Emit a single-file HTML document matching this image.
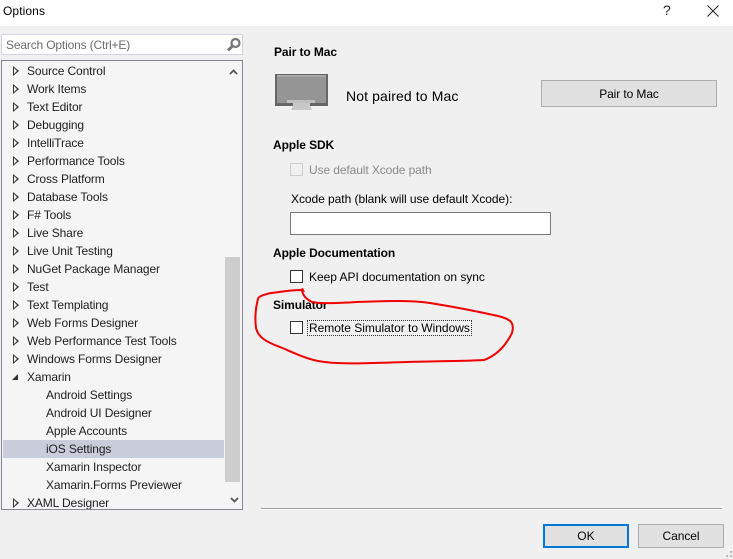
<!DOCTYPE html>
<html><head><meta charset="utf-8"><style>
html,body{margin:0;padding:0}
body{width:733px;height:559px;overflow:hidden;position:relative;background:#f0f0f0;font:12px "Liberation Sans",sans-serif;color:#1e1e1e}
div{position:absolute;white-space:nowrap;box-sizing:border-box}
.t{line-height:18px;height:18px;left:27px;letter-spacing:-.12px}
.c{left:46px}
.a{left:13px;width:0;height:0;border-left:6px solid #333;border-top:5px solid transparent;border-bottom:5px solid transparent}
.a:after{content:"";position:absolute;left:-5px;top:-3px;width:0;height:0;border-left:3.5px solid #f5f5f5;border-top:3px solid transparent;border-bottom:3px solid transparent}
.h{font-weight:bold;color:#000;letter-spacing:-.1px;line-height:16px}
.l{line-height:16px;color:#000;letter-spacing:-.03px}
.cb{width:13px;height:13px;border:1px solid #333;background:#fff}
.b{background:#e1e1e1;border:1px solid #adadad;text-align:center;color:#000}
</style></head><body>
<div style="left:0;top:0;width:733px;height:26px;background:#fff"></div>
<div style="left:3px;top:3px;line-height:16px;color:#000;letter-spacing:.1px">Options</div>
<div style="left:663px;top:2px;font-size:14px;line-height:16px;color:#222">?</div>
<svg style="position:absolute;left:707px;top:5px" width="12" height="12"><path d="M.5 .5L11.5 11.5M11.5 .5L.5 11.5" stroke="#222" stroke-width="1" fill="none"/></svg>

<div style="left:1px;top:34px;width:242px;height:21px;background:#fff;border:1px solid #d4d2e4"></div>
<div style="left:6px;top:37px;line-height:16px;color:#6d6d6d;letter-spacing:-.16px">Search Options (Ctrl+E)</div>
<svg style="position:absolute;left:226px;top:37px" width="16" height="16"><circle cx="9.5" cy="6" r="4" fill="none" stroke="#777" stroke-width="2.2"/><path d="M6.5 9L2 13.5" stroke="#777" stroke-width="3"/></svg>

<div style="left:1px;top:60px;width:242px;height:450px;background:#f5f5f5;border:1px solid #828790;overflow:hidden" id="tree">
<div style="left:223px;top:196px;width:15px;height:225px;background:#cdcdcd"></div>
<svg style="position:absolute;left:227px;top:7px" width="10" height="8"><path d="M1 6L4.5 2.5L8 6" stroke="#555" stroke-width="1.8" fill="none"/></svg>
<svg style="position:absolute;left:228px;top:435px" width="10" height="8"><path d="M1 2L4.5 5.5L8 2" stroke="#555" stroke-width="1.8" fill="none"/></svg>
<div style="left:1px;top:379px;width:221px;height:18px;background:#c9ccdb"></div>
</div>
<div class="a" style="top:66px"></div><div class="t" style="top:62px">Source Control</div>
<div class="a" style="top:84px"></div><div class="t" style="top:80px">Work Items</div>
<div class="a" style="top:102px"></div><div class="t" style="top:98px">Text Editor</div>
<div class="a" style="top:120px"></div><div class="t" style="top:116px">Debugging</div>
<div class="a" style="top:138px"></div><div class="t" style="top:134px">IntelliTrace</div>
<div class="a" style="top:156px"></div><div class="t" style="top:152px">Performance Tools</div>
<div class="a" style="top:174px"></div><div class="t" style="top:170px">Cross Platform</div>
<div class="a" style="top:192px"></div><div class="t" style="top:188px">Database Tools</div>
<div class="a" style="top:210px"></div><div class="t" style="top:206px">F# Tools</div>
<div class="a" style="top:228px"></div><div class="t" style="top:224px">Live Share</div>
<div class="a" style="top:246px"></div><div class="t" style="top:242px">Live Unit Testing</div>
<div class="a" style="top:264px"></div><div class="t" style="top:260px">NuGet Package Manager</div>
<div class="a" style="top:282px"></div><div class="t" style="top:278px">Test</div>
<div class="a" style="top:300px"></div><div class="t" style="top:296px">Text Templating</div>
<div class="a" style="top:318px"></div><div class="t" style="top:314px">Web Forms Designer</div>
<div class="a" style="top:336px"></div><div class="t" style="top:332px">Web Performance Test Tools</div>
<div class="a" style="top:354px"></div><div class="t" style="top:350px">Windows Forms Designer</div>
<svg style="position:absolute;left:11px;top:373px" width="9" height="9"><path d="M7 1V7H1Z" fill="#333"/></svg><div class="t" style="top:368px">Xamarin</div>
<div class="t c" style="top:386px">Android Settings</div>
<div class="t c" style="top:404px">Android UI Designer</div>
<div class="t c" style="top:422px">Apple Accounts</div>
<div class="t c" style="top:440px">iOS Settings</div>
<div class="t c" style="top:458px">Xamarin Inspector</div>
<div class="t c" style="top:476px">Xamarin.Forms Previewer</div>
<div class="a" style="top:498px"></div><div style="left:2px;top:494px;width:222px;height:15px;overflow:hidden"><div class="t" style="top:0;left:25px">XAML Designer</div></div>

<div class="h" style="left:274px;top:44px">Pair to Mac</div>
<svg style="position:absolute;left:275px;top:74px" width="54" height="37">
<path d="M0 0H53V32H0Z" fill="#666"/><path d="M2 1H51V29H2Z" fill="#959595"/><path d="M2 1H51V3H2Z" fill="#a8a8a8"/>
<path d="M12 26H40V29H12Z" fill="#c0c0c0"/><path d="M18 29H35V32L37 36H16L18 32Z" fill="#c8c8c8"/>
</svg>
<div style="left:346px;top:87px;font-size:14px;line-height:18px;color:#000;letter-spacing:.12px">Not paired to Mac</div>
<div class="b" style="left:541px;top:80px;width:176px;height:27px;line-height:26px;letter-spacing:-.1px">Pair to Mac</div>

<div class="h" style="left:273px;top:137px">Apple SDK</div>
<div class="cb" style="left:290px;top:163px;border-color:#ccc;background:#f0f0f0"></div>
<div class="l" style="left:309px;top:162px;color:#8a8a8a;letter-spacing:-.1px">Use default Xcode path</div>
<div class="l" style="left:291px;top:191px;letter-spacing:-.05px">Xcode path (blank will use default Xcode):</div>
<div style="left:290px;top:212px;width:261px;height:23px;background:#fff;border:1px solid #7a7a7a"></div>

<div class="h" style="left:273px;top:245px">Apple Documentation</div>
<div class="cb" style="left:290px;top:270px"></div>
<div class="l" style="left:309px;top:269px">Keep API documentation on sync</div>
<div class="h" style="left:273px;top:297px">Simulator</div>
<div class="cb" style="left:290px;top:321px"></div>
<div class="l" style="left:307px;top:320px;height:16px;padding:0 1px;border:1px dotted #333;line-height:14px;letter-spacing:-.02px">Remote Simulator to Windows</div>

<svg style="position:absolute;left:0;top:0" width="733" height="559"><path d="M301 290C290 290 280 292 271 293C262 295 258 297 258 299C255 310 255 320 256 328C258 337 266 342 280 347C292 352 304 358 318 361C340 365 370 363 407 362C440 361 470 361 484 360C495 356 505 347 512 333C515 322 510 319 498 316C480 312 455 307 430 303C410 300 385 301 357 302C340 303 322 304 312 302C306 299 302 295 302 289" fill="none" stroke="#f00000" stroke-width="2"/><path d="M298 290L303 288L305 292Z" fill="#f00000"/></svg>

<div style="left:261px;top:508px;width:461px;height:1px;background:#a0a0a0"></div>
<div style="left:261px;top:509px;width:461px;height:1px;background:#fff"></div>
<div class="b" style="left:543px;top:524px;width:86px;height:24px;border:2px solid #0078d7;line-height:20px;letter-spacing:.1px">OK</div>
<div class="b" style="left:638px;top:524px;width:86px;height:24px;line-height:22px;letter-spacing:-.05px">Cancel</div>
<svg style="position:absolute;left:722px;top:549px" width="11" height="10"><path d="M8 2h2v2h-2zM4 6h2v2h-2zM8 6h2v2h-2z" fill="#bbb"/></svg>
</body></html>
